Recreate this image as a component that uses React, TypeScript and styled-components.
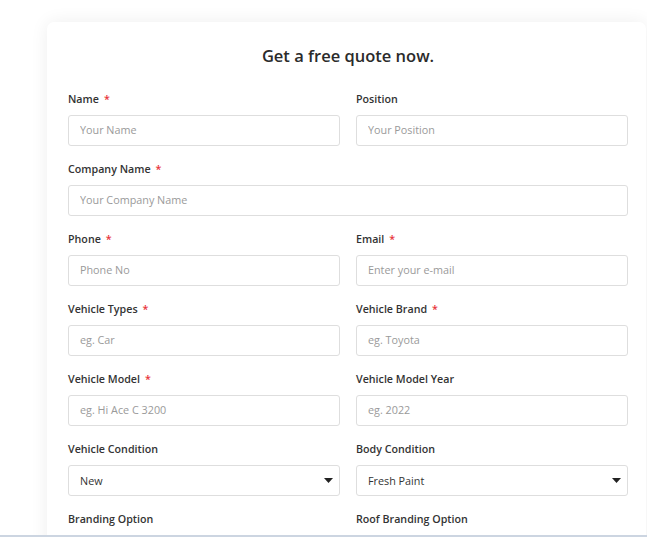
import React from "react";
import styled, { createGlobalStyle } from "styled-components";

const GlobalStyle = createGlobalStyle`
  html, body {
    margin: 0;
    padding: 0;
    background: #ffffff;
  }
  body {
    font-family: "Open Sans", "Noto Sans", Arial, sans-serif;
  }
  * {
    box-sizing: border-box;
  }
`;

// 画面全体。下端に薄い区切り線がある
const Page = styled.div`
  height: 537px;
  overflow: hidden;
  display: flex;
  flex-direction: column;
`;

const Stage = styled.div`
  height: 535px;
  overflow: hidden;
  padding: 22px 1px 0 47px;
`;

const BottomRule = styled.div`
  height: 2px;
  background: #ccd5e1;
`;

const Card = styled.div`
  width: 599px;
  background: #fff;
  border-radius: 7px;
  box-shadow: 0 0 18px rgba(0, 0, 0, 0.07);
  padding: 22px 18px 40px 21px;
`;

const Title = styled.h2`
  margin: 0 0 23px;
  text-align: center;
  font-size: 16.5px;
  line-height: 24px;
  font-weight: 600;
  color: #2b2b2b;
`;

const FormGrid = styled.div`
  display: grid;
  grid-template-columns: 1fr 1fr;
  column-gap: 16px;
  row-gap: 15px;
`;

const Field = styled.div<{ $wide?: boolean }>`
  display: flex;
  flex-direction: column;
  gap: 7px;
  grid-column: ${(p) => (p.$wide ? "1 / -1" : "auto")};
`;

const Label = styled.label`
  font-size: 10.7px;
  line-height: 17px;
  font-weight: 600;
  color: #333;
`;

const Required = styled.span`
  color: #e8333a;
  margin-left: 5px;
`;

const Input = styled.input`
  height: 31px;
  width: 100%;
  border: 1px solid #dedede;
  border-radius: 3px;
  padding: 0 11px 2px;
  font-family: inherit;
  font-size: 10.8px;
  color: #333;
  outline: none;
  &::placeholder {
    color: #9a9a9a;
  }
`;

const SelectBox = styled.div`
  height: 31px;
  border: 1px solid #dedede;
  border-radius: 3px;
  display: flex;
  align-items: center;
  padding: 0 6px 1px 11px;
  font-size: 10.8px;
  color: #333;
`;

const Caret = styled.svg`
  margin-left: auto;
  width: 9px;
  height: 5px;
`;

type FieldDef = {
  label: string;
  placeholder?: string;
  required?: boolean;
  wide?: boolean;
  select?: string;
};

const fields: FieldDef[] = [
  { label: "Name", placeholder: "Your Name", required: true },
  { label: "Position", placeholder: "Your Position" },
  { label: "Company Name", placeholder: "Your Company Name", required: true, wide: true },
  { label: "Phone", placeholder: "Phone No", required: true },
  { label: "Email", placeholder: "Enter your e-mail", required: true },
  { label: "Vehicle Types", placeholder: "eg. Car", required: true },
  { label: "Vehicle Brand", placeholder: "eg. Toyota", required: true },
  { label: "Vehicle Model", placeholder: "eg. Hi Ace C 3200", required: true },
  { label: "Vehicle Model Year", placeholder: "eg. 2022" },
  { label: "Vehicle Condition", select: "New" },
  { label: "Body Condition", select: "Fresh Paint" },
  { label: "Branding Option", placeholder: "" },
  { label: "Roof Branding Option", placeholder: "" },
];

const App: React.FC = () => {
  return (
    <Page>
      <GlobalStyle />
      <Stage>
        <Card>
          <Title>Get a free quote now.</Title>
          <FormGrid>
            {fields.map((f) => (
              <Field key={f.label} $wide={f.wide}>
                <Label>
                  {f.label}
                  {f.required && <Required>*</Required>}
                </Label>
                {f.select ? (
                  <SelectBox>
                    {f.select}
                    <Caret viewBox="0 0 9 5">
                      <path d="M0 0 L9 0 L4.5 5 Z" fill="#222" />
                    </Caret>
                  </SelectBox>
                ) : (
                  <Input placeholder={f.placeholder} />
                )}
              </Field>
            ))}
          </FormGrid>
        </Card>
      </Stage>
      <BottomRule />
    </Page>
  );
};

export default App;
